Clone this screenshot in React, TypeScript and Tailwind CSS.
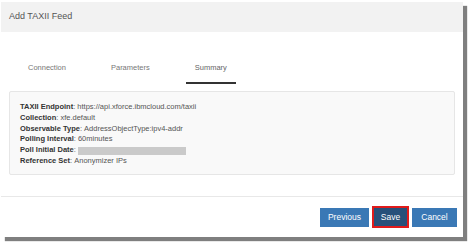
import React from "react";

const rows: { label: string; value?: string; blank?: boolean }[] = [
  { label: "TAXII Endpoint", value: "https://api.xforce.ibmcloud.com/taxii" },
  { label: "Collection", value: "xfe.default" },
  { label: "Observable Type", value: "AddressObjectType:ipv4-addr" },
  { label: "Polling Interval", value: "60minutes" },
  { label: "Poll Initial Date", blank: true },
  { label: "Reference Set", value: "Anonymizer IPs" },
];

export default function App() {
  return (
    <div
      className="w-[474px] h-[246px] bg-white pt-[2px] pl-[1px] overflow-hidden"
      style={{ fontFamily: '"Liberation Sans", Arial, sans-serif' }}
    >
      <div className="w-[462px] h-[235px] bg-white flex flex-col shadow-[4px_4px_1px_rgba(0,0,0,0.5)]">
        <div className="h-[30px] bg-[#f2f2f2] pl-[8px] flex items-center text-[9px] text-[#555]">
          Add TAXII Feed
        </div>
        <div className="flex pl-[18px] gap-[27px] pt-[29px] text-[7.5px] text-[#777]">
          <div className="px-[9px] pb-[7px] leading-[14px] border-b-2 border-transparent">Connection</div>
          <div className="px-[9px] pb-[7px] leading-[14px] border-b-2 border-transparent">Parameters</div>
          <div className="px-[9px] pb-[7px] leading-[14px] border-b-2 border-[#333] text-[#666]">Summary</div>
        </div>
        <div className="mx-[8px] mt-[7px] h-[84px] border border-[#e6e6e6] bg-[#f9f9f9] rounded-[2px] px-[10px] pt-[10px] text-[7.5px] leading-[10.8px] text-[#555]">
          {rows.map((r) => (
            <div key={r.label} className="flex items-center whitespace-nowrap">
              <span className="font-bold text-[#333]">{r.label}</span>
              <span>:&nbsp;</span>
              {r.blank ? (
                <span className="inline-block w-[108px] h-[8px] bg-[#cacaca]" />
              ) : (
                <span>{r.value}</span>
              )}
            </div>
          ))}
        </div>
        <div className="mt-[21px] border-t border-[#e8e8e8] flex justify-end items-center pr-[6px] pt-[9px] gap-[3px] text-[8.5px] text-white">
          <div className="w-[49px] h-[19px] bg-[#3a78b5] flex items-center justify-center">Previous</div>
          <div className="w-[37px] h-[22px] border-2 border-[#e01b1b] flex items-center justify-center">
            <div className="w-[33px] h-[18px] bg-[#27507a] flex items-center justify-center">Save</div>
          </div>
          <div className="w-[45px] h-[19px] bg-[#3a78b5] flex items-center justify-center">Cancel</div>
        </div>
      </div>
    </div>
  );
}
